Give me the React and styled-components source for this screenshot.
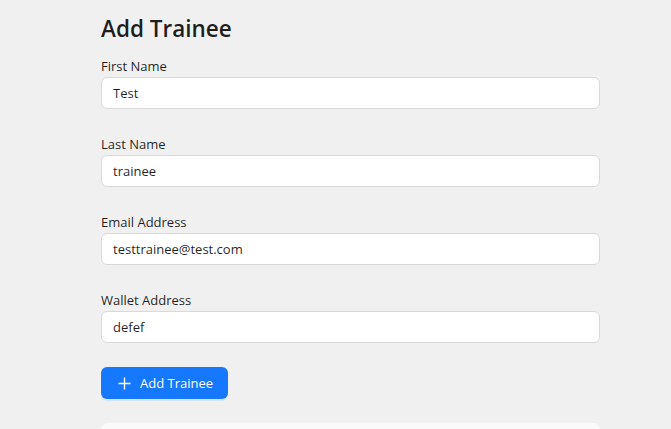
import React from "react";
import styled, { createGlobalStyle } from "styled-components";

const GlobalStyle = createGlobalStyle`
  body {
    margin: 0;
    background: #f0f0f0;
    font-family: "Open Sans", "Noto Sans", sans-serif;
    overflow: hidden;
  }
`;

const StyledPage = styled.div`
  width: 499px;
  padding: 13px 0 0 101px;
`;

const StyledTitle = styled.h2`
  margin: 0 0 10px;
  font-size: 22.5px;
  line-height: 32px;
  font-weight: 600;
  color: rgba(0, 0, 0, 0.88);
`;

const StyledForm = styled.form`
  display: flex;
  flex-direction: column;
`;

const StyledItem = styled.div`
  display: flex;
  flex-direction: column;
  margin-bottom: 24px;
`;

const StyledLabel = styled.label`
  font-size: 13px;
  line-height: 22px;
  color: rgba(0, 0, 0, 0.88);
`;

const StyledInput = styled.input`
  box-sizing: border-box;
  height: 32px;
  padding: 4px 11px;
  border: 1px solid #d9d9d9;
  border-radius: 6px;
  background: #fff;
  font-family: inherit;
  font-size: 13px;
  color: rgba(0, 0, 0, 0.88);
  outline: none;
`;

const StyledButton = styled.button`
  align-self: flex-start;
  display: flex;
  align-items: center;
  gap: 9px;
  height: 32px;
  padding: 0 15px 0 17px;
  border: none;
  border-radius: 6px;
  background: #1677ff;
  color: #fff;
  font-family: inherit;
  font-size: 13px;
  box-shadow: 0 2px 0 rgba(5, 145, 255, 0.1);
  cursor: pointer;
`;

const StyledCard = styled.div`
  margin-top: 24px;
  height: 7px;
  border-radius: 8px 8px 0 0;
  background: #fafafa;
`;

const fields = [
  { label: "First Name", value: "Test" },
  { label: "Last Name", value: "trainee" },
  { label: "Email Address", value: "testtrainee@test.com" },
  { label: "Wallet Address", value: "defef" },
];

const PlusIcon = () => (
  <svg width="13" height="13" viewBox="0 0 13 13" fill="none">
    <path d="M6.5 0.5v12M0.5 6.5h12" stroke="#fff" strokeWidth="1.4" />
  </svg>
);

const App = () => (
  <>
    <GlobalStyle />
    <StyledPage>
      <StyledTitle>Add Trainee</StyledTitle>
      <StyledForm onSubmit={(e) => e.preventDefault()}>
        {fields.map((f) => (
          <StyledItem key={f.label}>
            <StyledLabel>{f.label}</StyledLabel>
            <StyledInput defaultValue={f.value} />
          </StyledItem>
        ))}
        <StyledButton type="submit">
          <PlusIcon />
          Add Trainee
        </StyledButton>
      </StyledForm>
      <StyledCard />
    </StyledPage>
  </>
);

export default App;
